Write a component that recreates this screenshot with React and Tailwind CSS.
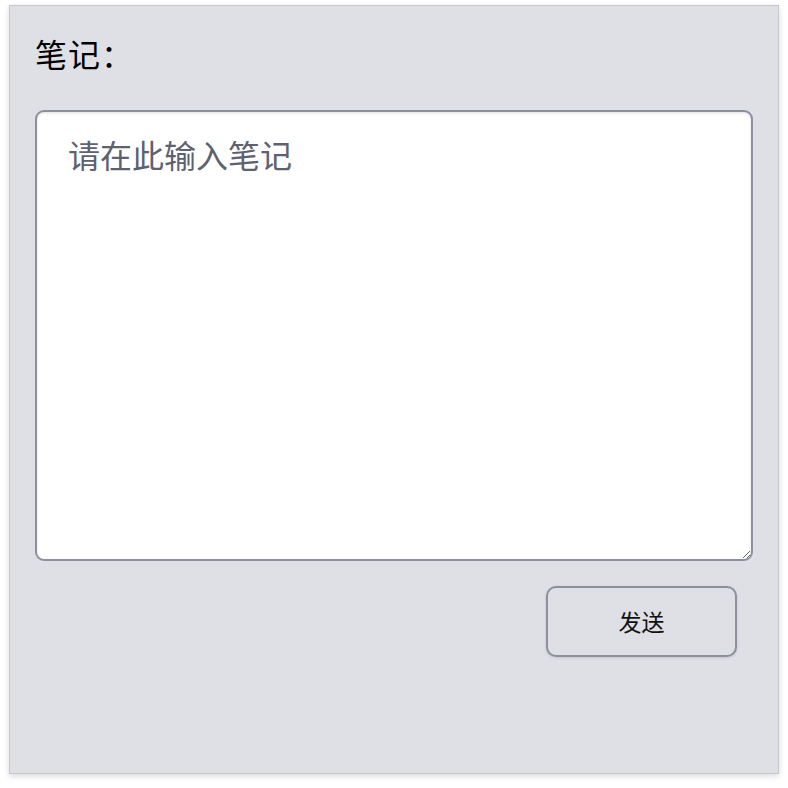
import { useState } from "react";

export default function App() {
  const [note, setNote] = useState("");

  return (
    <div className="pl-[9px] pt-[5px] bg-white min-h-[788px] font-['Noto_Sans_CJK_SC','Noto_Sans',sans-serif]">
      <div className="w-[770px] h-[769px] bg-[#dfe0e5] border border-[#c6c7cb] shadow-[0_2px_6px_rgba(0,0,0,0.15)] px-[25px] pt-[27px]">
        <h1 className="text-[32px] leading-[40px] text-black tracking-[1px]">笔记：</h1>
        <textarea
          value={note}
          onChange={(e) => setNote(e.target.value)}
          placeholder="请在此输入笔记"
          className="block mt-[37px] w-[718px] h-[451px] bg-white border-2 border-[#8b909c] rounded-[9px] px-[31px] pt-[22px] text-[32px] leading-[40px] text-black placeholder:text-[#5d6170] shadow-[inset_0_1px_3px_rgba(0,0,0,0.12)] outline-none"
        />
        <div className="flex justify-end pr-[16px] mt-[25px]">
          <button className="w-[191px] h-[71px] border-2 border-[#8b909c] rounded-[10px] bg-[#dfe0e5] text-[23px] text-[#111] shadow-[0_1px_3px_rgba(0,0,0,0.12)]">
            发送
          </button>
        </div>
      </div>
    </div>
  );
}
